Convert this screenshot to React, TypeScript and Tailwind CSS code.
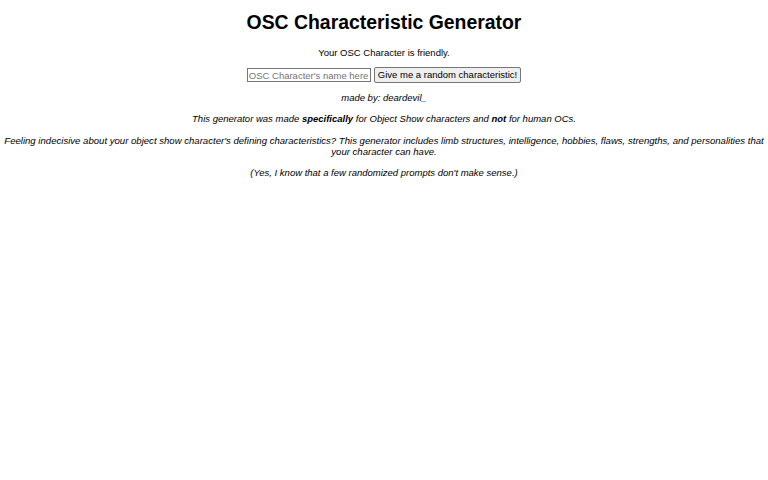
export default function App() {
  return (
    <div className="min-h-screen bg-white px-[3px] text-center text-[9.5px] leading-[11px] text-black font-['Liberation_Sans',Arial,sans-serif]">
      <h1 className="pt-[11px] text-[19.4px] leading-[22px] font-bold">OSC Characteristic Generator</h1>
      <p className="mt-[13.5px]">Your OSC Character is friendly.</p>
      <div className="mt-[9.5px] flex items-center justify-center gap-[3px]">
        <input
          type="text"
          placeholder="OSC Character's name here"
          className="h-[14px] w-[124px] border border-[#767676] px-[1px] text-[9.5px] leading-[12px] placeholder:text-[#757575] outline-none"
        />
        <button className="h-[16px] rounded-[2px] border border-[#767676] bg-[#efefef] px-[3px] text-[9.5px] leading-[12px]">
          Give me a random characteristic!
        </button>
      </div>
      <p className="mt-[8.5px] italic">made by: deardevil_</p>
      <p className="mt-[10px] italic">
        This generator was made <b>specifically</b> for Object Show characters and <b>not</b> for human OCs.
      </p>
      <p className="mt-[11px] text-[9.58px] italic">
        Feeling indecisive about your object show character's defining characteristics? This generator includes limb structures, intelligence, hobbies, flaws, strengths, and personalities that your character can have.
      </p>
      <p className="mt-[10px] italic">(Yes, I know that a few randomized prompts don't make sense.)</p>
    </div>
  );
}
